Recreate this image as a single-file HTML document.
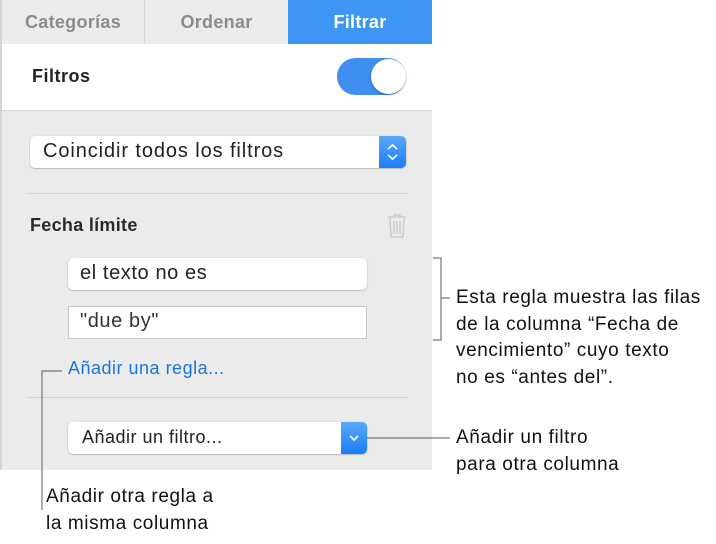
<!DOCTYPE html>
<html><head><meta charset="utf-8"><style>
*{margin:0;padding:0;box-sizing:border-box}
body{width:716px;height:544px;background:#fff;position:relative;overflow:hidden;font-family:"Liberation Sans",sans-serif;color:#222}
.a{position:absolute}
.tab{position:absolute;top:0;height:44px;font-size:18px;font-weight:bold;color:#8c8c8c;text-align:center;line-height:44px;background:#ececec;letter-spacing:.3px}
.t{position:absolute;white-space:nowrap}
.ann{font-size:19px;color:#111;line-height:26.5px;letter-spacing:.6px}
</style></head><body>
<div class="a" style="left:0;top:0;width:432px;height:470px;background:#ebebeb;border-left:2px solid #d4d4d4"></div>
<div class="tab" style="left:2px;width:143px;border-right:1px solid #d6d6d6">Categorías</div>
<div class="tab" style="left:145px;width:143px">Ordenar</div>
<div class="tab" style="left:288px;width:144px;background:#3e96f4;color:#fff">Filtrar</div>
<div class="a" style="left:2px;top:44px;width:430px;height:67px;background:#fff;border-bottom:1px solid #d4d4d4"></div>
<div class="t" style="left:32px;top:66px;font-size:18px;font-weight:bold;letter-spacing:.5px">Filtros</div>
<div class="a" style="left:337px;top:58px;width:69px;height:37px;border-radius:19px;background:#3e8ff0"></div>
<div class="a" style="left:371px;top:59px;width:35px;height:35px;border-radius:50%;background:#fff;box-shadow:0 1px 2px rgba(0,0,0,.35)"></div>
<div class="a" style="left:30px;top:136px;width:376px;height:32px;background:#fff;border-radius:5px;box-shadow:0 0.5px 1.5px rgba(0,0,0,.35)"></div>
<div class="t" style="left:43px;top:140px;font-size:20px;letter-spacing:.9px">Coincidir todos los filtros</div>
<div class="a" style="left:379px;top:136px;width:27px;height:32px;background:linear-gradient(#5aa8fb,#1a7ef5);border-radius:0 5px 5px 0"></div>
<svg class="a" style="left:379px;top:136px" width="27" height="32"><path d="M9 13l4.5-4 4.5 4M9 19l4.5 4 4.5-4" stroke="#fff" stroke-width="1.6" fill="none"/></svg>
<div class="a" style="left:27px;top:193px;width:381px;height:1px;background:#d2d2d2"></div>
<div class="t" style="left:30px;top:215px;font-size:18px;font-weight:bold;color:#2a2a2a;letter-spacing:.3px">Fecha límite</div>
<svg class="a" style="left:386px;top:213px" width="22" height="26"><g stroke="#c8c8c8" stroke-width="1.3" fill="none"><path d="M2 4h18M8 4V2h6v2M4 5l1 19h12l1-19M8 8v13M11 8v13M14 8v13"/></g></svg>
<div class="a" style="left:68px;top:258px;width:299px;height:32px;background:#fff;border-radius:5px;box-shadow:0 0.5px 1.5px rgba(0,0,0,.35)"></div>
<div class="t" style="left:80px;top:262px;font-size:20px;letter-spacing:.6px">el texto no es</div>
<div class="a" style="left:68px;top:306px;width:299px;height:33px;background:#fff;border:1px solid #c4c4c4"></div>
<div class="t" style="left:80px;top:310px;font-size:20px;color:#333;letter-spacing:.6px">"due by"</div>
<div class="t" style="left:68px;top:358px;font-size:18px;color:#1c74e0;letter-spacing:.5px">Añadir una regla...</div>
<div class="a" style="left:27px;top:397px;width:381px;height:1px;background:#d2d2d2"></div>
<div class="a" style="left:68px;top:422px;width:299px;height:32px;background:#fff;border-radius:5px;box-shadow:0 0.5px 1.5px rgba(0,0,0,.35)"></div>
<div class="t" style="left:82px;top:427px;font-size:18px;letter-spacing:.5px">Añadir un filtro...</div>
<div class="a" style="left:341px;top:422px;width:26px;height:32px;background:linear-gradient(#5aa8fb,#1a7ef5);border-radius:0 5px 5px 0"></div>
<svg class="a" style="left:341px;top:422px" width="26" height="32"><path d="M9 14l4 4 4-4" stroke="#fff" stroke-width="1.6" fill="none"/></svg>
<svg class="a" style="left:0;top:0" width="716" height="544"><g stroke="#777" stroke-width="1.2" fill="none">
<path d="M62 371H42V510"/><path d="M367 438H450"/><path d="M433 258H441V340H433M441 298H450"/></g></svg>
<div class="t ann" style="left:456px;top:285px">Esta regla muestra las filas<br>de la columna “Fecha de<br>vencimiento” cuyo texto<br>no es “antes del”.</div>
<div class="t ann" style="left:456px;top:425px">Añadir un filtro<br>para otra columna</div>
<div class="t ann" style="left:46px;top:484px">Añadir otra regla a<br>la misma columna</div>
</body></html>
